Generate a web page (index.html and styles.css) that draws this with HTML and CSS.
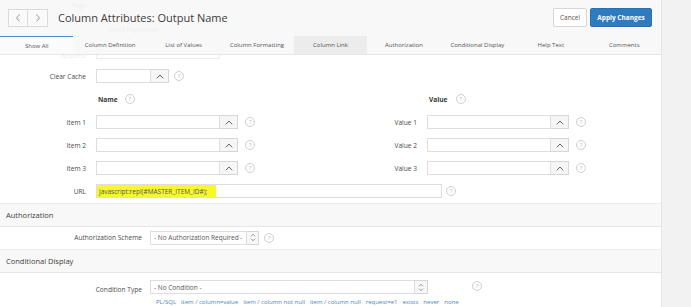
FILE: index.html
```html
<!DOCTYPE html>
<html lang="en">
<head>
<meta charset="utf-8">
<title>Column Attributes: Output Name</title>
<link rel="stylesheet" href="styles.css">
</head>
<body>
<div class="page">
  <div class="main">
    <header class="hdr">
      <span class="ghost g-page">Page</span>
      <span class="ghost g-reset">Reset Pagination</span>
      <div class="nav">
        <button class="navbtn" type="button"><svg width="6" height="8" viewBox="0 0 6 8"><polyline points="4.5,0.5 1.5,4 4.5,7.5" fill="none" stroke="#8a8a8a" stroke-width="0.9"/></svg></button>
        <button class="navbtn" type="button"><svg width="6" height="8" viewBox="0 0 6 8"><polyline points="1.5,0.5 4.5,4 1.5,7.5" fill="none" stroke="#8a8a8a" stroke-width="0.9"/></svg></button>
      </div>
      <h1 class="title">Column Attributes: Output Name</h1>
      <div class="actions">
        <button class="btn" type="button">Cancel</button>
        <button class="btn btn-primary" type="button">Apply Changes</button>
      </div>
    </header>

    <nav class="tabs">
      <span class="tab tab-current">Show All</span>
      <span class="tab">Column Definition</span>
      <span class="tab">List of Values</span>
      <span class="tab">Column Formatting</span>
      <span class="tab tab-hover">Column Link</span>
      <span class="tab">Authorization</span>
      <span class="tab">Conditional Display</span>
      <span class="tab">Help Text</span>
      <span class="tab">Comments</span>
    </nav>

    <section class="form">
      <div class="ghost-row">
        <span class="lbl lbl-ghost">Request</span>
        <span class="ghost-input"></span>
      </div>

      <div class="row">
        <span class="lbl">Clear Cache</span>
        <div class="field f-cc"><span class="inp"></span><span class="pick"><svg width="8" height="5" viewBox="0 0 8 5"><polyline points="0.8,4.3 4,1 7.2,4.3" fill="none" stroke="#555" stroke-width="0.9"/></svg></span></div>
        <span class="help h-cc">?</span>
      </div>

      <div class="row">
        <div class="half-l">
          <span class="lbl"></span>
          <div class="colhead"><b>Name</b><span class="help">?</span></div>
        </div>
        <div class="half-r">
          <span class="lbl lbl-r"></span>
          <div class="colhead"><b>Value</b><span class="help">?</span></div>
        </div>
      </div>

      <div class="row">
        <div class="half-l">
          <span class="lbl">Item 1</span>
          <div class="field f-item"><span class="inp"></span><span class="pick"><svg width="8" height="5" viewBox="0 0 8 5"><polyline points="0.8,4.3 4,1 7.2,4.3" fill="none" stroke="#555" stroke-width="0.9"/></svg></span></div>
          <span class="help h-item">?</span>
        </div>
        <div class="half-r">
          <span class="lbl lbl-r">Value 1</span>
          <div class="field f-item"><span class="inp"></span><span class="pick"><svg width="8" height="5" viewBox="0 0 8 5"><polyline points="0.8,4.3 4,1 7.2,4.3" fill="none" stroke="#555" stroke-width="0.9"/></svg></span></div>
          <span class="help h-item">?</span>
        </div>
      </div>

      <div class="row">
        <div class="half-l">
          <span class="lbl">Item 2</span>
          <div class="field f-item"><span class="inp"></span><span class="pick"><svg width="8" height="5" viewBox="0 0 8 5"><polyline points="0.8,4.3 4,1 7.2,4.3" fill="none" stroke="#555" stroke-width="0.9"/></svg></span></div>
          <span class="help h-item">?</span>
        </div>
        <div class="half-r">
          <span class="lbl lbl-r">Value 2</span>
          <div class="field f-item"><span class="inp"></span><span class="pick"><svg width="8" height="5" viewBox="0 0 8 5"><polyline points="0.8,4.3 4,1 7.2,4.3" fill="none" stroke="#555" stroke-width="0.9"/></svg></span></div>
          <span class="help h-item">?</span>
        </div>
      </div>

      <div class="row">
        <div class="half-l">
          <span class="lbl">Item 3</span>
          <div class="field f-item"><span class="inp"></span><span class="pick"><svg width="8" height="5" viewBox="0 0 8 5"><polyline points="0.8,4.3 4,1 7.2,4.3" fill="none" stroke="#555" stroke-width="0.9"/></svg></span></div>
          <span class="help h-item">?</span>
        </div>
        <div class="half-r">
          <span class="lbl lbl-r">Value 3</span>
          <div class="field f-item"><span class="inp"></span><span class="pick"><svg width="8" height="5" viewBox="0 0 8 5"><polyline points="0.8,4.3 4,1 7.2,4.3" fill="none" stroke="#555" stroke-width="0.9"/></svg></span></div>
          <span class="help h-item">?</span>
        </div>
      </div>

      <div class="row">
        <span class="lbl">URL</span>
        <div class="field f-url"><span class="inp inp-text"><mark class="hl">javascript:repl(#MASTER_ITEM_ID#);</mark></span></div>
        <span class="help h-url">?</span>
      </div>
    </section>

    <h2 class="sect">Authorization</h2>
    <div class="row row-wide">
      <span class="lbl lbl-wide">Authorization Scheme</span>
      <div class="field f-auth"><span class="inp inp-text sel">- No Authorization Required -</span><span class="spin"><svg width="6" height="9" viewBox="0 0 6 9"><polyline points="1,3.3 3,1.3 5,3.3" fill="none" stroke="#777" stroke-width="0.8"/><polyline points="1,5.7 3,7.7 5,5.7" fill="none" stroke="#777" stroke-width="0.8"/></svg></span></div>
      <span class="help h-auth">?</span>
    </div>

    <h2 class="sect">Conditional Display</h2>
    <div class="row row-wide row-cond">
      <span class="lbl lbl-wide">Condition Type</span>
      <div class="field f-cond"><span class="inp inp-text sel">- No Condition -</span><span class="spin"><svg width="6" height="9" viewBox="0 0 6 9"><polyline points="1,3.3 3,1.3 5,3.3" fill="none" stroke="#777" stroke-width="0.8"/><polyline points="1,5.7 3,7.7 5,5.7" fill="none" stroke="#777" stroke-width="0.8"/></svg></span></div>
      <span class="help h-cond">?</span>
    </div>
    <div class="shortcuts">
      <a>PL/SQL</a><a>item / column=value</a><a>item / column not null</a><a>item / column null</a><a>request=e1</a><a>exists</a><a>never</a><a>none</a>
    </div>
  </div>
  <aside class="side"></aside>
</div>
</body>
</html>
```

FILE: styles.css
```css
* { box-sizing: border-box; }
html, body { margin: 0; padding: 0; }
body {
  width: 691px;
  height: 307px;
  overflow: hidden;
  background: #f2f2f2;
  font-family: "Open Sans", "Noto Sans", "DejaVu Sans", sans-serif;
  color: #404040;
}
.page { display: flex; height: 307px; }
.main { width: 661px; background: #fff; display: flex; flex-direction: column; }
.side { flex: 1; background: #f2f2f2; border-left: 1px solid #e6e6e6; }

/* header */
.hdr {
  position: relative;
  height: 37px;
  background: #f8f8f8;
  display: flex;
  align-items: center;
  padding: 0 9px 1px 8px;
}
.ghost { position: absolute; font-size: 6.5px; color: #f0f0f0; }
.g-page { left: 72px; top: 1px; }
.g-reset { left: 108px; top: 25px; }
.nav { display: flex; height: 18px; }
.navbtn {
  width: 20px; height: 18px; padding: 0; margin: 0;
  border: 1px solid #dadada; background: #fafafa;
  display: flex; align-items: center; justify-content: center;
}
.navbtn + .navbtn { border-left: none; }
.title {
  margin: 0 0 0 10px;
  font-size: 11px;
  font-weight: 400;
  color: #3c3c3c;
  flex: 1;
}
.actions { display: flex; gap: 3px; }
.btn {
  width: 34px;
  height: 19px;
  padding: 0;
  font-family: inherit;
  font-size: 6.5px;
  color: #555;
  background: #fff;
  border: 1px solid #d6d6d6;
  border-radius: 2px;
}
.btn-primary {
  width: 62px;
  background: #2f7bbf;
  border-color: #2b71ae;
  color: #fff;
  font-weight: 700;
}

/* tabs */
.tabs {
  height: 19px;
  display: grid;
  grid-template-columns: repeat(9, 1fr);
  background: #f8f8f8;
  border-bottom: 1px solid #e6e6e6;
}
.tab {
  display: flex; align-items: center; justify-content: center;
  font-size: 6px; color: #555;
}
.tab-current { background: #fbfbfb; border-top: 1px solid #4a8fcf; }
.tab-hover { background: #ececec; }

/* form */
.form { display: flex; flex-direction: column; }
.ghost-row { height: 10px; display: flex; align-items: flex-start; }
.ghost-input {
  margin-left: 10px; width: 124px; height: 4px;
  border: 1px solid #ececec; border-top: none;
}
.row { height: 23px; display: flex; align-items: center; }
.half-l, .half-r { display: flex; align-items: center; height: 100%; }
.half-l { width: 255px; flex: none; }
.lbl {
  width: 86px;
  flex: none;
  text-align: right;
  font-size: 6.6px;
  color: #4a4a4a;
}
.lbl.lbl-ghost { color: #ededed; margin-top: -4px; }
.lbl.lbl-r { width: 162px; }
.field { display: flex; height: 14px; margin-left: 10px; flex: none; }
.inp {
  flex: 1;
  border: 1px solid #dedede;
  background: #fff;
}
.pick {
  width: 18px;
  border: 1px solid #d6d6d6;
  border-left: none;
  background: #f6f6f6;
  display: flex; align-items: center; justify-content: center;
}
.f-cc { width: 73px; }
.f-item { width: 142px; }
.f-url { width: 346px; }
.help {
  width: 10px; height: 10px; flex: none;
  border: 1px solid #cfcfcf;
  border-radius: 50%;
  font-size: 6px;
  line-height: 8px;
  text-align: center;
  color: #b8b8b8;
}
.h-cc { margin-left: 5px; }
.h-item { margin-left: 7px; }
.h-url { margin-left: 4px; }
.colhead { display: flex; align-items: center; margin-left: 12px; gap: 7px; font-size: 6.6px; }
.colhead b { color: #3a3a3a; }
.half-r .colhead { gap: 8px; }
.inp-text { display: flex; align-items: center; font-size: 6.5px; padding: 0 1px; overflow: hidden; white-space: nowrap; }
.hl {
  background: #f7f730;
  color: #555;
  height: 14px;
  margin: -1px 0 -1px -2px;
  padding: 0 3px;
  display: flex; align-items: center;
  width: 120px;
}

/* sections */
.sect {
  margin: 0;
  height: 24px;
  display: flex; align-items: center;
  padding-left: 6px;
  font-size: 7.5px;
  font-weight: 400;
  color: #404040;
  background: #f8f8f8;
  border-top: 1px solid #ececec;
  border-bottom: 1px solid #e6e6e6;
}
.row-wide { height: 23px; }
.row-cond { height: 22px; margin-top: 1px; align-items: flex-end; padding-bottom: 1px; }
.lbl.lbl-wide { width: 142px; }
.f-auth { width: 109px; margin-left: 8px; }
.f-cond { width: 278px; margin-left: 8px; }
.sel { padding-left: 3px; color: #555; }
.spin {
  width: 13px;
  border: 1px solid #d6d6d6;
  border-left: 1px solid #dedede;
  background: #f7f7f7;
  display: flex; align-items: center; justify-content: center;
}
.f-cond .spin { width: 14px; }
.f-auth .inp, .f-cond .inp { border-right: none; }
.h-auth { margin-left: 5px; }
.h-cond { margin-left: 44px; align-self: center; margin-top: 4px; }

.shortcuts {
  display: flex;
  gap: 5px;
  padding-left: 156px;
  height: 10px;
  align-items: center;
  margin-top: 2px;
}
.shortcuts a { font-size: 6px; color: #4a84c4; white-space: nowrap; }
```
